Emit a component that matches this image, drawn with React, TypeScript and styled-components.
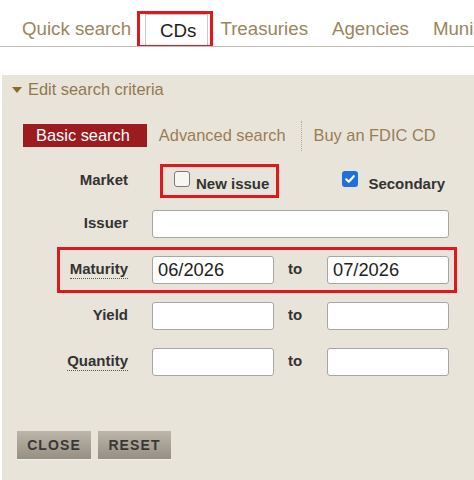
import React from 'react'
import styled, { createGlobalStyle } from 'styled-components';

const GlobalStyle = createGlobalStyle`
  html, body {
    margin: 0;
    padding: 0;
    background: #ffffff;
    font-family: "Liberation Sans", Arial, sans-serif;
  }
`;

const Page = styled.div`
  width: 474px;
  height: 480px;
  overflow: hidden;
  background: #ffffff;
`;

const TopNav = styled.div`
  display: flex;
  align-items: flex-end;
  height: 46px;
  padding-left: 10px;
  border-bottom: 1px solid #c4c0b8;
  white-space: nowrap;
  overflow: hidden;
`;

const NavTab = styled.div<{ $active?: boolean }>`
  position: relative;
  flex-shrink: 0;
  height: 33px;
  line-height: 32px;
  font-size: 18.7px;
  color: ${p => (p.$active ? '#1e1e1e' : '#9a8660')};
  padding: ${p => (p.$active ? '0 11px 0 14px' : '0 12px')};
  margin: ${p => (p.$active ? '0 0 -1px 2px' : '0')};
  background: ${p => (p.$active ? '#ffffff' : 'transparent')};
  border: ${p => (p.$active ? '1px solid #c8c8c8' : 'none')};
  border-bottom: none;
  box-sizing: border-box;
`;

const Highlight = styled.span`
  position: absolute;
  left: -9px;
  right: -6px;
  top: -4px;
  bottom: -1px;
  border: 3px solid #e0181e;
  pointer-events: none;
`;

const Panel = styled.div`
  margin: 28px 0 0 2px;
  height: 420px;
  background: #e9e4da;
  padding-top: 4px;
  box-sizing: border-box;
`;

const CriteriaToggle = styled.div`
  display: flex;
  align-items: center;
  height: 20px;
  padding-left: 10px;
  font-size: 16.4px;
  color: #93774f;
`;

const Caret = styled.span`
  width: 0;
  height: 0;
  border-left: 5px solid transparent;
  border-right: 5px solid transparent;
  border-top: 6px solid #8b6a2e;
  margin-right: 6px;
  margin-top: 1px;
`;

const SubTabs = styled.div`
  display: flex;
  align-items: center;
  margin: 25px 0 0 21px;
  height: 23px;
  white-space: nowrap;
`;

const SubTab = styled.div<{ $active?: boolean }>`
  height: 23px;
  line-height: 23px;
  font-size: 16.4px;
  padding: ${p => (p.$active ? '0 17px 0 13px' : '0')};
  margin-right: ${p => (p.$active ? '12px' : '0')};
  background: ${p => (p.$active ? '#9b1b1f' : 'transparent')};
  color: ${p => (p.$active ? '#ffffff' : '#9a7d55')};
`;

const Divider = styled.span`
  width: 0;
  height: 30px;
  border-left: 1px dotted #b3ab9c;
  margin: 0 12px 0 15px;
`;

const Form = styled.div`
  margin: 8px 0 0 55px;
  width: 400px;
`;

const Row = styled.div<{ $marked?: boolean }>`
  display: grid;
  grid-template-columns: 92px 122px 53px 122px;
  align-items: center;
  height: 46px;
  box-sizing: border-box;
  padding: 6px 5px 6px 0;
  border: 3px solid ${p => (p.$marked ? '#e0181e' : 'transparent')};
`;

const Label = styled.div`
  text-align: right;
  width: 68px;
  font-size: 15px;
  font-weight: bold;
  color: #333333;
  margin-top: -4px;
`;

const LabelText = styled.span<{ $hint?: boolean }>`
  border-bottom: ${p => (p.$hint ? '1px dotted #555555' : 'none')};
  padding-bottom: 1px;
`;

const Field = styled.input<{ $wide?: boolean }>`
  grid-column: ${p => (p.$wide ? '2 / 5' : 'auto')};
  height: 28px;
  width: 100%;
  box-sizing: border-box;
  border: 1px solid #a6a6a6;
  border-radius: 3px;
  background: #ffffff;
  font-family: "Liberation Sans", Arial, sans-serif;
  font-size: 18.3px;
  color: #222222;
  padding: 0 5px;
  outline: none;
`;

const To = styled.div`
  padding-left: 14px;
  font-size: 15px;
  font-weight: bold;
  color: #333333;
  margin-top: -4px;
`;

const Options = styled.div`
  grid-column: 2 / 5;
  display: flex;
  align-items: center;
  margin-left: 8px;
  white-space: nowrap;
`;

const Option = styled.label<{ $marked?: boolean }>`
  display: flex;
  flex-shrink: 0;
  align-items: center;
  height: 34px;
  box-sizing: border-box;
  padding: 0 7px 0 11px;
  border: 3px solid ${p => (p.$marked ? '#e0181e' : 'transparent')};
  margin-left: ${p => (p.$marked ? '0' : '49px')};
  font-size: 15px;
  font-weight: bold;
  color: #333333;
`;

const Box = styled.span<{ $checked?: boolean }>`
  display: inline-flex;
  align-items: center;
  justify-content: center;
  flex-shrink: 0;
  width: 16px;
  height: 16px;
  box-sizing: border-box;
  border-radius: 3px;
  border: ${p => (p.$checked ? 'none' : '1px solid #7a7a7a')};
  background: ${p => (p.$checked ? '#1f6fdc' : '#f8f6f2')};
  margin-top: -5px;
`;

const OptionText = styled.span<{ $gap: number }>`
  margin-left: ${p => p.$gap}px;
  padding-top: 5px;
`;

const Buttons = styled.div`
  display: flex;
  gap: 7px;
  margin: 46px 0 0 15px;
`;

const Button = styled.button<{ $w: number }>`
  width: ${p => p.$w}px;
  height: 28px;
  border: none;
  background: linear-gradient(#bbb5aa, #968f83);
  font-family: "Liberation Sans", Arial, sans-serif;
  font-size: 14px;
  font-weight: bold;
  letter-spacing: 1.1px;
  color: #3a3834;
  padding: 0;
  box-shadow: 0 1px 0 #f4f1ea;
`;

function CheckBox({ checked }: { checked?: boolean }) {
  return (
    <Box $checked={checked}>
      {checked && (
        <svg width="12" height="12" viewBox="0 0 12 12">
          <path d="M2.2 6.3 L4.8 8.8 L9.8 3.2" fill="none" stroke="#ffffff" strokeWidth="2.2" strokeLinecap="round" strokeLinejoin="round" />
        </svg>
      )}
    </Box>
  );
}

export default function App() {
  return (
    <Page>
      <GlobalStyle />
      <TopNav>
        <NavTab>Quick search</NavTab>
        <NavTab $active>
          CDs
          <Highlight />
        </NavTab>
        <NavTab>Treasuries</NavTab>
        <NavTab>Agencies</NavTab>
        <NavTab>Munis</NavTab>
      </TopNav>

      <Panel>
        <CriteriaToggle>
          <Caret />
          Edit search criteria
        </CriteriaToggle>

        <SubTabs>
          <SubTab $active>Basic search</SubTab>
          <SubTab>Advanced search</SubTab>
          <Divider />
          <SubTab>Buy an FDIC CD</SubTab>
        </SubTabs>

        <Form>
          <Row>
            <Label><LabelText>Market</LabelText></Label>
            <Options>
              <Option $marked>
                <CheckBox />
                <OptionText $gap={6}>New issue</OptionText>
              </Option>
              <Option>
                <CheckBox checked />
                <OptionText $gap={10}>Secondary</OptionText>
              </Option>
            </Options>
          </Row>
          <Row>
            <Label><LabelText>Issuer</LabelText></Label>
            <Field $wide />
          </Row>
          <Row $marked>
            <Label><LabelText $hint>Maturity</LabelText></Label>
            <Field defaultValue="06/2026" />
            <To>to</To>
            <Field defaultValue="07/2026" />
          </Row>
          <Row>
            <Label><LabelText>Yield</LabelText></Label>
            <Field />
            <To>to</To>
            <Field />
          </Row>
          <Row>
            <Label><LabelText $hint>Quantity</LabelText></Label>
            <Field />
            <To>to</To>
            <Field />
          </Row>
        </Form>

        <Buttons>
          <Button $w={74}>CLOSE</Button>
          <Button $w={73}>RESET</Button>
        </Buttons>
      </Panel>
    </Page>
  );
}
